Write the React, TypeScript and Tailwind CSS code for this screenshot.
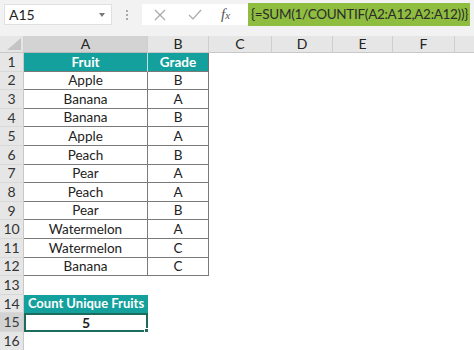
import React from 'react';

const cols = ['A', 'B', 'C', 'D', 'E', 'F'];

const data: [string, string][] = [
  ['Apple', 'B'],
  ['Banana', 'A'],
  ['Banana', 'B'],
  ['Apple', 'A'],
  ['Peach', 'B'],
  ['Pear', 'A'],
  ['Peach', 'A'],
  ['Pear', 'B'],
  ['Watermelon', 'A'],
  ['Watermelon', 'C'],
  ['Banana', 'C'],
];

function RowHead({ n, active }: { n: number; active?: boolean }) {
  return (
    <div
      className={
        'h-[18.6px] flex items-center justify-center border-b border-[#d8d8d8] border-r border-r-[#c8c8c8] text-[14px] leading-none ' +
        (active ? 'bg-[#d3d3d3] text-[#3a3a3a]' : 'bg-[#e6e6e6] text-[#333]')
      }
    >
      {n}
    </div>
  );
}

function Empty({ n }: { n: number }) {
  return (
    <>
      {Array.from({ length: n }).map((_, i) => (
        <div key={i} className="h-[18.6px] bg-white" />
      ))}
    </>
  );
}

export default function App() {
  return (
    <div
      className="w-[474px] h-[350px] overflow-hidden bg-white text-[#222]"
      style={{ fontFamily: 'Lato, "Open Sans", sans-serif' }}
    >
      {/* formula bar */}
      <div className="h-[36px] bg-[#f2f2f2] flex items-start pt-[4px] pl-[4px]">
        <div className="w-[108px] h-[21px] bg-white border border-[#e0e0e0] flex items-center justify-between pl-[4px] pr-[6px]">
          <span className="text-[14px]">A15</span>
          <svg width="6" height="4" viewBox="0 0 6 4">
            <path d="M0 0h6L3 4z" fill="#777" />
          </svg>
        </div>
        <div className="w-[30px] h-[21px] flex flex-col items-center justify-center gap-[2px]">
          <span className="w-[2px] h-[2px] bg-[#aaa]" />
          <span className="w-[2px] h-[2px] bg-[#aaa]" />
          <span className="w-[2px] h-[2px] bg-[#aaa]" />
        </div>
        <div className="w-[106px] h-[21px] bg-white flex items-center">
          <svg width="12" height="12" viewBox="0 0 12 12" className="ml-[12px]">
            <path d="M1 1l10 10M11 1L1 11" stroke="#a8a8a8" strokeWidth="1.2" />
          </svg>
          <svg width="14" height="12" viewBox="0 0 14 12" className="ml-[22px]">
            <path d="M1 6l4 4 8-9" stroke="#a8a8a8" strokeWidth="1.2" fill="none" />
          </svg>
          <span
            className="ml-[19px] text-[15px] italic text-[#555]"
            style={{ fontFamily: '"Liberation Serif", serif' }}
          >
            f<span className="text-[11px]">x</span>
          </span>
        </div>
        <div className="w-[222px] h-[23px] -mt-[1px] bg-[#8fbd3f] flex items-center pl-[3px] text-[13.5px] text-[#2c2c2c] tracking-[-0.3px] whitespace-nowrap">
          {'{=SUM(1/COUNTIF(A2:A12,A2:A12))}'}
        </div>
      </div>

      {/* sheet */}
      <div className="grid grid-cols-[24px_124px_61px_63px_61px_60px_62px_1fr]">
        {/* column headers */}
        <div className="h-[17px] bg-[#e6e6e6] border-b border-[#c8c8c8] border-r border-r-[#d0d0d0] relative overflow-hidden">
          <svg width="14" height="12" viewBox="0 0 14 12" className="absolute right-[2px] bottom-[2px]">
            <path d="M14 0v12H0z" fill="#c4c4c4" />
          </svg>
        </div>
        {cols.map((c) => (
          <div
            key={c}
            className={
              'h-[17px] flex items-center justify-center text-[14px] leading-none border-r border-[#cfcfcf] border-b ' +
              (c === 'A' ? 'bg-[#d3d3d3] border-b-[#b9b9b9]' : 'bg-[#e6e6e6] border-b-[#c8c8c8]')
            }
          >
            {c}
          </div>
        ))}
        <div className="h-[17px] bg-[#e6e6e6] border-b border-[#c8c8c8]" />

        {/* row 1 */}
        <RowHead n={1} />
        <div className="h-[18.6px] bg-[#14a09c] text-white font-bold text-[13.5px] flex items-center justify-center border-r border-[#bfe3e2] border-b border-b-[#7a7a7a]">
          Fruit
        </div>
        <div className="h-[18.6px] bg-[#14a09c] text-white font-bold text-[13.5px] flex items-center justify-center border-r border-[#6f6f6f] border-b border-b-[#7a7a7a]">
          Grade
        </div>
        <Empty n={5} />

        {data.map(([f, g], i) => (
          <React.Fragment key={i}>
            <RowHead n={i + 2} />
            <div className="h-[18.6px] text-[13.5px] flex items-center justify-center border-r border-b border-[#7a7a7a]">
              {f}
            </div>
            <div className="h-[18.6px] text-[13.5px] flex items-center justify-center border-r border-b border-[#7a7a7a]">
              {g}
            </div>
            <Empty n={5} />
          </React.Fragment>
        ))}

        {/* row 13 */}
        <RowHead n={13} />
        <Empty n={7} />

        {/* row 14 */}
        <RowHead n={14} />
        <div className="h-[18.6px] bg-[#14a09c] text-white font-bold text-[13px] flex items-center justify-center whitespace-nowrap">
          Count Unique Fruits
        </div>
        <Empty n={6} />

        {/* row 15 */}
        <RowHead n={15} active />
        <div className="h-[18.6px] relative border-2 border-[#1d6b5a] text-[14px] font-bold flex items-center justify-center">
          5
          <span className="absolute -right-[3px] -bottom-[3px] w-[5px] h-[5px] bg-[#1d6b5a] border border-white" />
        </div>
        <Empty n={6} />

        {/* row 16 */}
        <RowHead n={16} />
        <Empty n={7} />
      </div>
    </div>
  );
}
